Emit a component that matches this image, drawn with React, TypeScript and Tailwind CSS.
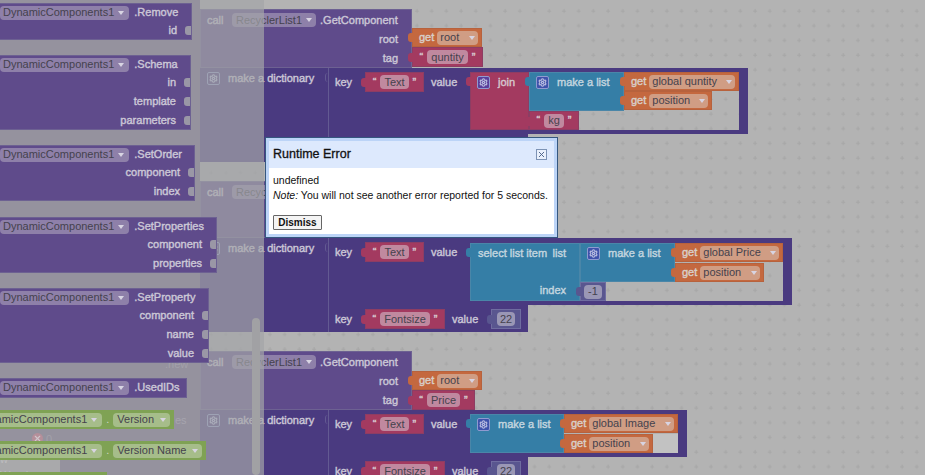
import React from 'react';
import { Settings, X } from 'lucide-react';

const LABEL = 'text-[11px] [-webkit-text-stroke:0.4px]';

const Arrow: React.FC = () => (
  <svg width="6" height="4" viewBox="0 0 6 4" className="shrink-0 text-[#d8d4e2]">
    <path d="M0 0h6L3 4z" fill="currentColor" />
  </svg>
);

const Pill: React.FC<{ text: string; bg: string; arrow?: boolean; pad?: string; className?: string }> = ({
  text,
  bg,
  arrow = true,
  pad = 'px-[4px]',
  className = '',
}) => (
  <span className={`flex h-[14px] shrink-0 items-center justify-between gap-[4px] rounded-[4px] text-[11px] whitespace-nowrap text-[#45424d] [-webkit-text-stroke:0] ${pad} ${bg} ${className}`}>
    {text}
    {arrow && <Arrow />}
  </span>
);

const Tab: React.FC<{ className?: string }> = ({ className = 'top-[4px]' }) => (
  <span className={`absolute -left-[5px] h-[9px] w-[6px] rounded-l-[3px] bg-inherit ${className}`} />
);

const Mutator: React.FC<{ bg: string }> = ({ bg }) => (
  <span className={`flex h-[13px] w-[13px] shrink-0 items-center justify-center rounded-[2px] border border-[#8f9ad0] ${bg}`}>
    <Settings size={9} strokeWidth={3} className="text-[#b9bde0]" />
  </span>
);

/* flyout block: header with the component dropdown, then right aligned socket rows */
const FlyBlock: React.FC<{ width: string; title: string; rows?: string[] }> = ({ width, title, rows = [] }) => (
  <div className={`flex flex-col border-t border-r border-[#6d6192] bg-[#5f4b8b] text-[#cbc7d6] shadow-[inset_0_-1px_0_#6d6192] ${LABEL} ${width}`}>
    <div className="flex h-[17px] items-center gap-[5px]">
      <Pill text="DynamicComponents1" bg="bg-[#8e80a9]" pad="pr-[5px] pl-[3px]" />
      <span>{title}</span>
    </div>
    {rows.map((r) => (
      <div key={r} className="relative flex h-[19px] items-center justify-end pr-[14px]">
        {r}
        <span className="absolute right-0 top-[5px] h-[9px] w-[6px] rounded-l-[3px] bg-[#9a97a6]" />
      </div>
    ))}
  </div>
);

const GreenBlock: React.FC<{ width: string; field: string }> = ({ width, field }) => (
  <div className={`-ml-[28px] flex h-[19px] items-center gap-[4px] bg-[#7fa254] pr-[4px] pl-[1px] ${width}`}>
    <Pill text="DynamicComponents1" bg="bg-[#a6bd8a]" pad="pr-[5px] pl-[3px]" />
    <span className="text-[11px] text-[#cfd9c0]">.</span>
    <Pill text={field} bg="bg-[#a6bd8a]" className="flex-1" />
  </div>
);

const Get: React.FC<{ width: string; name: string; className?: string }> = ({ width, name, className = '' }) => (
  <div className={`relative flex h-[19px] shrink-0 items-center gap-[3px] border border-[#b7623d] bg-[#c4683f] pr-[3px] pl-[6px] text-[#d8cfc9] ${LABEL} ${width} ${className}`}>
    <Tab />
    get
    <Pill text={name} bg="bg-[#d09d84]" pad="px-[3px]" className="min-w-0 flex-1" />
  </div>
);

const Str: React.FC<{ width: string; text: string; h?: string }> = ({ width, text, h = 'h-[20px]' }) => (
  <div className={`relative flex shrink-0 items-center justify-center gap-[4px] border border-[#8d3d63] bg-[#a33a60] text-[#d6c7ce] ${LABEL} ${h} ${width}`}>
    <Tab className="top-[5px]" />
    “
    <Pill text={text} bg="bg-[#c0899f]" arrow={false} />
    ”
  </div>
);

const Num: React.FC = () => (
  <div className="relative flex h-[20px] w-[30px] items-center justify-center border border-[#6f6ca0] bg-[#59568f]">
    <Tab className="top-[5px]" />
    <Pill text="22" bg="bg-[#9a97b5]" arrow={false} pad="px-[3px]" />
  </div>
);

const CallBlock: React.FC<{ height?: string }> = ({ height = 'h-[59px]' }) => (
  <div className={`w-[212px] shrink-0 border border-[#6d6192] bg-[#5f4b8b] text-[#cbc7d6] ${LABEL} ${height}`}>
    <div className="flex h-[20px] items-center pl-[6px]">
      <span className="w-[25px]">call</span>
      <Pill text="RecyclerList1" bg="bg-[#8e80a9]" />
      <span className="ml-[4px]">.GetComponent</span>
    </div>
    <div className="flex h-[19px] items-center justify-end pr-[13px]">root</div>
    <div className="flex h-[19px] items-center justify-end pr-[13px]">tag</div>
  </div>
);

const ListBlock: React.FC<{ width: string; tab?: boolean }> = ({ width, tab = true }) => (
  <div className={`relative h-[39px] shrink-0 border border-[#4a86a8] bg-[#357ea6] text-[#c3d5df] ${LABEL} ${width}`}>
    {tab && <Tab />}
    <div className="flex h-[19px] items-center gap-[8px] pl-[6px]">
      <Mutator bg="bg-[#3f52ab]" />
      make a list
    </div>
  </div>
);

/* one key/value row of a dictionary; children is the value socket content */
const DictRow: React.FC<{
  head?: boolean;
  height: string;
  keyBlock: React.ReactNode;
  children: React.ReactNode;
}> = ({ head, height, keyBlock, children }) => (
  <div className={`flex ${height}`}>
    <div className={`flex w-[128px] shrink-0 items-start justify-between bg-[#4a3a80] pt-[2px] pl-[7px] text-[#cbc7d6] ${LABEL}`}>
      {head && (
        <>
          <span className="flex items-center gap-[8px]">
            <Mutator bg="bg-[#4a3a80]" />
            make a dictionary
          </span>
          <span className="mt-[3px] h-[9px] w-[3px] rounded-l-[3px] border-l border-[#635a92]" />
        </>
      )}
    </div>
    <div className={`flex shrink-0 items-start border-l border-[#635a92] bg-[#4a3a80] pt-[4px] pl-[6px] text-[#cbc7d6] ${LABEL}`}>
      <span className="w-[30px] pt-[2px]">key</span>
      {keyBlock}
      <span className="ml-[7px] w-[39px] pt-[2px]">value</span>
    </div>
    {children}
  </div>
);

const Fontsize: React.FC<{ height?: string }> = ({ height = 'h-[27px]' }) => (
  <DictRow height={height} keyBlock={<Str width="w-[80px]" text="Fontsize" />}>
    <div className="bg-[#4a3a80] pt-[4px] pr-[7px]">
      <Num />
    </div>
  </DictRow>
);

export default function App() {
  return (
    <div className="relative h-[475px] w-[925px] overflow-hidden bg-[#b3b3b3] font-['Liberation_Sans',Arial,sans-serif]">
      {/* workspace dots */}
      <svg className="absolute inset-0 h-full w-full">
        <defs>
          <pattern id="grid" x="13.1" y="4" width="14.7" height="14.7" patternUnits="userSpaceOnUse">
            <path d="M5 7h4M7 5v4" stroke="#a6a6a6" strokeWidth="1" />
          </pattern>
        </defs>
        <rect width="925" height="475" fill="url(#grid)" />
      </svg>

      {/* first group */}
      <div className="absolute left-[200px] top-[9px] flex flex-col">
        <div className="flex">
          <CallBlock />
          <div className="mt-[19px] flex flex-col">
            <Get width="w-[70px]" name="root" />
            <Str width="w-[71px]" text="quntity" />
          </div>
        </div>
        <DictRow head height="h-[66px]" keyBlock={<Str width="w-[59px]" text="Text" />}>
          <div className="flex h-[66px] w-[278px] border-t-[4px] border-r-[9px] border-b-[4px] border-[#4a3a80]">
            <div className="relative h-[58px] w-[59px] shrink-0 border border-[#8d3d63] bg-[#a33a60] text-[#d6c7ce]">
              <Tab />
              <div className={`flex h-[19px] items-center gap-[8px] pl-[6px] ${LABEL}`}>
                <Mutator bg="bg-[#5a3e9c]" />
                join
              </div>
            </div>
            <div className="flex flex-col">
              <div className="flex">
                <ListBlock width="w-[95px]" />
                <div className="flex flex-col">
                  <Get width="w-[115px]" name="global quntity" />
                  <Get width="w-[88px]" name="position" />
                </div>
              </div>
              <Str width="w-[50px]" h="h-[19px]" text="kg" />
            </div>
          </div>
        </DictRow>
        {/* lies behind the dialog, only its left end shows through the flyout */}
        <Fontsize height="h-[28px]" />
      </div>

      {/* second group, the dialog hides its top half */}
      <div className="absolute left-[200px] top-[181px] flex flex-col">
        <CallBlock height="h-[57px]" />
        <DictRow head height="h-[67px]" keyBlock={<Str width="w-[59px]" text="Text" />}>
          <div className="flex h-[67px] w-[322px] border-t-[5px] border-r-[9px] border-b-[4px] border-[#4a3a80]">
            <div className={`relative flex h-[58px] w-[110px] shrink-0 flex-col justify-between border border-[#4a86a8] bg-[#357ea6] pr-[13px] pl-[7px] text-[#c3d5df] ${LABEL}`}>
              <Tab />
              <div className="flex h-[19px] items-center justify-between">
                <span>select list item</span>
                <span>list</span>
              </div>
              <div className="flex h-[19px] items-center justify-end">index</div>
            </div>
            <div className="flex flex-col">
              <div className="flex">
                <ListBlock width="w-[95px]" tab={false} />
                <div className="flex flex-col">
                  <Get width="w-[108px]" name="global Price" />
                  <Get width="w-[89px]" name="position" className="mt-[1px]" />
                </div>
              </div>
              <div className="relative flex h-[19px] w-[26px] items-center justify-center border border-[#6f6ca0] bg-[#59568f]">
                <Tab />
                <Pill text="-1" bg="bg-[#9a97b5]" arrow={false} />
              </div>
            </div>
          </div>
        </DictRow>
        <Fontsize />
      </div>

      {/* third group */}
      <div className="absolute left-[200px] top-[351px] flex flex-col">
        <div className="flex">
          <CallBlock />
          <div className="mt-[20px] flex flex-col">
            <Get width="w-[70px]" name="root" />
            <Str width="w-[63px]" text="Price" />
          </div>
        </div>
        <DictRow head height="h-[47px]" keyBlock={<Str width="w-[59px]" text="Text" />}>
          <div className="flex h-[47px] w-[217px] border-y-[4px] border-r-[9px] border-[#4a3a80]">
            <ListBlock width="w-[94px]" />
            <div className="flex flex-col">
              <Get width="w-[114px]" name="global Image" />
              <div className="mt-[1px] flex">
                <Get width="w-[89px]" name="position" />
                <div className="h-[19px] w-[25px] bg-[#c2c2c2]" />
              </div>
            </div>
          </div>
        </DictRow>
        <Fontsize />
      </div>

      {/* flyout over the workspace */}
      <div className="absolute inset-y-0 left-0 flex w-[264px]">
        <div className="w-[200px] bg-[#95929e]" />
        <div className="flex-1 bg-[#a4a5a8]/70" />
      </div>
      <div className="absolute left-[252px] top-[318px] h-[157px] w-[8px] rounded-[4px] bg-[#a1a1a4]" />

      {/* what is left of the designer panel behind the flyout */}
      <span className="absolute left-[165px] top-[356px] text-[11px] text-[#a3a1aa]">.new</span>
      <span className="absolute left-[175px] top-[412px] text-[11px] text-[#a7a5ae]">es</span>
      <span className="absolute left-[32px] top-[433px] flex h-[11px] w-[11px] items-center justify-center rounded-full bg-[#b58f9a] text-[#d0c6cc]">
        <X size={9} strokeWidth={3} />
      </span>
      <span className="absolute left-[46px] top-[431px] text-[11px] text-[#a3a1aa]">0</span>
      <span className="absolute left-0 top-[460px] flex h-[14px] w-[60px] items-center justify-end bg-[#a9a9ab] pr-[10px] text-[11px] text-[#bdbdbf]">
        w Warnings
      </span>

      <div className="absolute left-0 top-[3px] flex flex-col gap-[15px]">
        <FlyBlock width="w-[192px]" title=".Remove" rows={['id']} />
        <FlyBlock width="w-[191px]" title=".Schema" rows={['in', 'template', 'parameters']} />
        <FlyBlock width="w-[195px]" title=".SetOrder" rows={['component', 'index']} />
        <FlyBlock width="mt-[1px] w-[217px]" title=".SetProperties" rows={['component', 'properties']} />
        <FlyBlock width="w-[209px]" title=".SetProperty" rows={['component', 'name', 'value']} />
        <FlyBlock width="h-[20px] w-[187px]" title=".UsedIDs" />
        <div className="-mt-[3px] flex flex-col gap-[12px]">
          <GreenBlock width="w-[202px]" field="Version" />
          <GreenBlock width="w-[234px]" field="Version Name" />
          <div className="h-[4px] w-[107px] bg-[#7fa254]" />
        </div>
      </div>

      {/* error dialog */}
      <div className="absolute left-[265px] top-[137px] flex h-[101px] w-[293px] flex-col border border-[#35577f] bg-white outline-[3px] -outline-offset-[4px] outline-[#bcd4f7]">
        <div className="m-[3px] mb-0 flex h-[27px] items-center justify-between bg-[#dde9fd] pr-[7px] pl-[4px]">
          <span className="text-[12.5px] text-[#111] [-webkit-text-stroke:0.3px]">Runtime Error</span>
          <span className="flex h-[11px] w-[11px] items-center justify-center border border-[#7d93b5] bg-[#e9f0fc] text-[#4a6187]">
            <X size={9} strokeWidth={2.5} />
          </span>
        </div>
        <div className="flex flex-col items-start px-[7px] pt-[5px] text-[10.5px] leading-[15px] whitespace-nowrap text-[#111]">
          <p>undefined</p>
          <p>
            <em>Note:</em> You will not see another error reported for 5 seconds.
          </p>
          <button className="mt-[12px] h-[15px] w-[49px] rounded-[1px] border border-[#666] bg-[#f4f4f4] text-[10px] leading-[13px] font-bold text-[#111]">
            Dismiss
          </button>
        </div>
      </div>
    </div>
  );
}
